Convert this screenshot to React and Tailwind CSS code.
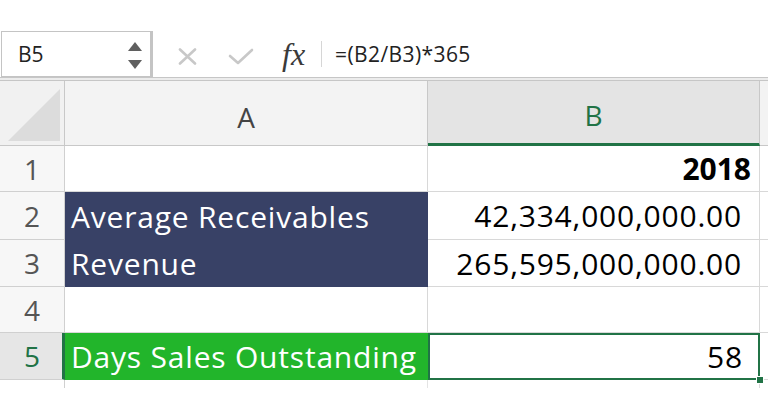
export default function App() {
  const cell = "font-['Open_Sans','Noto_Sans',sans-serif]";
  return (
    <div className={`w-[768px] h-[405px] overflow-hidden bg-white ${cell}`}>
      {/* formula bar */}
      <div className="h-[31px]" />
      <div className="flex h-[46px] items-stretch">
        <div className="ml-px flex w-[152px] items-center justify-between border border-r-[3px] border-[#c4c4c4] pl-[16px] pr-[8px]">
          <span className="pt-[2px] text-[21px] text-[#222] tracking-[0px]">B5</span>
          <div className="flex flex-col items-center gap-[9px] pt-[2px]">
            <svg width="14" height="9" viewBox="0 0 14 9"><path d="M7 0 L14 9 L0 9 Z" fill="#5f5f5f" /></svg>
            <svg width="14" height="9" viewBox="0 0 14 9"><path d="M0 0 L14 0 L7 9 Z" fill="#5f5f5f" /></svg>
          </div>
        </div>
        <div className="flex items-center pl-[25px] pt-[4px]">
          <svg width="19" height="17" viewBox="0 0 19 17">
            <path d="M2 1.5 L17 15.5 M17 1.5 L2 15.5" stroke="#c8c8c8" strokeWidth="2.6" strokeLinecap="round" />
          </svg>
          <svg className="ml-[31px]" width="26" height="17" viewBox="0 0 26 17">
            <path d="M2 8 L10 15 L24 2" stroke="#c8c8c8" strokeWidth="2.6" fill="none" strokeLinecap="round" strokeLinejoin="round" />
          </svg>
          <span className="ml-[28px] -mt-[4px] text-[32px] italic text-[#3a3a3a] font-['Liberation_Serif',serif] leading-none tracking-[0px]">fx</span>
          <div className="ml-[16px] -mt-[4px] h-[26px] w-px bg-[#d6d6d6]" />
          <span className="ml-[13px] -mt-[2px] text-[21px] text-[#222] tracking-[0.4px]">=(B2/B3)*365</span>
        </div>
      </div>
      <div className="h-[4px] border-t border-b border-[#c6c6c6] bg-[#ececec]" />

      {/* grid */}
      <div className="grid grid-cols-[65px_363px_332px_1fr] grid-rows-[65px_46px_48px_47px_46px_47px_8px]">
        {/* header row */}
        <div className="relative border-r border-b border-[#c8c8c8] bg-[#f1f1f1]">
          <svg className="absolute right-[4px] bottom-[4px]" width="52" height="52" viewBox="0 0 52 52">
            <path d="M52 0 L52 52 L0 52 Z" fill="#dcdcdc" />
          </svg>
        </div>
        <div className="flex items-center justify-center border-r border-b border-[#c8c8c8] bg-[#f3f3f3] pt-[8px] text-[28px] text-[#444]">A</div>
        <div className="flex items-center justify-center border-r border-b-[3px] border-r-[#c8c8c8] border-b-[#217346] bg-[#e4e4e4] pt-[6px] text-[28px] text-[#217346]">B</div>
        <div className="border-b border-[#c8c8c8] bg-[#f3f3f3]" />

        {/* row 1 */}
        <RowHead n="1" />
        <div className="border-r border-b border-[#d8d8d8]" />
        <div className="flex items-center justify-end border-r border-b border-[#d8d8d8] pr-[8px] text-[30px] font-bold text-black">2018</div>
        <div className="border-b border-[#d8d8d8]" />

        {/* row 2 */}
        <RowHead n="2" />
        <div className="flex items-center bg-[#384166] pl-[6px] text-[30px] text-white tracking-[0.8px]">Average Receivables</div>
        <div className="flex items-center justify-end border-r border-b border-[#d8d8d8] pr-[17px] text-[30px] text-black tracking-[0.8px]">42,334,000,000.00</div>
        <div className="border-b border-[#d8d8d8]" />

        {/* row 3 */}
        <RowHead n="3" />
        <div className="flex items-center bg-[#384166] pl-[6px] text-[30px] text-white tracking-[0.8px]">Revenue</div>
        <div className="flex items-center justify-end border-r border-b border-[#d8d8d8] pr-[17px] text-[30px] text-black tracking-[0.8px]">265,595,000,000.00</div>
        <div className="border-b border-[#d8d8d8]" />

        {/* row 4 */}
        <RowHead n="4" />
        <div className="border-r border-b border-[#d8d8d8]" />
        <div className="border-r border-b border-[#d8d8d8]" />
        <div className="border-b border-[#d8d8d8]" />

        {/* row 5 */}
        <div className="flex items-center justify-center border-r-[3px] border-b border-r-[#217346] border-b-[#d0d0d0] bg-[#e6e6e6] pl-[2px] text-[28px] text-[#217346]">5</div>
        <div className="flex items-center bg-[#22b52b] pl-[6px] text-[30px] text-white tracking-[0.8px]">Days Sales Outstanding</div>
        <div className="relative flex items-center justify-end border-2 border-[#217346] pr-[15px] text-[30px] text-black tracking-[0.8px]">
          58
          <div className="absolute -right-[6px] -bottom-[6px] h-[8px] w-[8px] border border-white bg-[#217346]" />
        </div>
        <div className="border-b border-[#d8d8d8]" />

        {/* row 6 (cut off) */}
        <div className="border-r border-[#d0d0d0]" />
        <div className="border-r border-[#e4e4e4]" />
        <div className="border-r border-[#d8d8d8]" />
        <div />
      </div>
    </div>
  );
}

function RowHead({ n }) {
  return (
    <div className="flex items-center justify-center border-r border-b border-[#d0d0d0] bg-[#f7f7f7] text-[28px] text-[#555]">
      {n}
    </div>
  );
}
